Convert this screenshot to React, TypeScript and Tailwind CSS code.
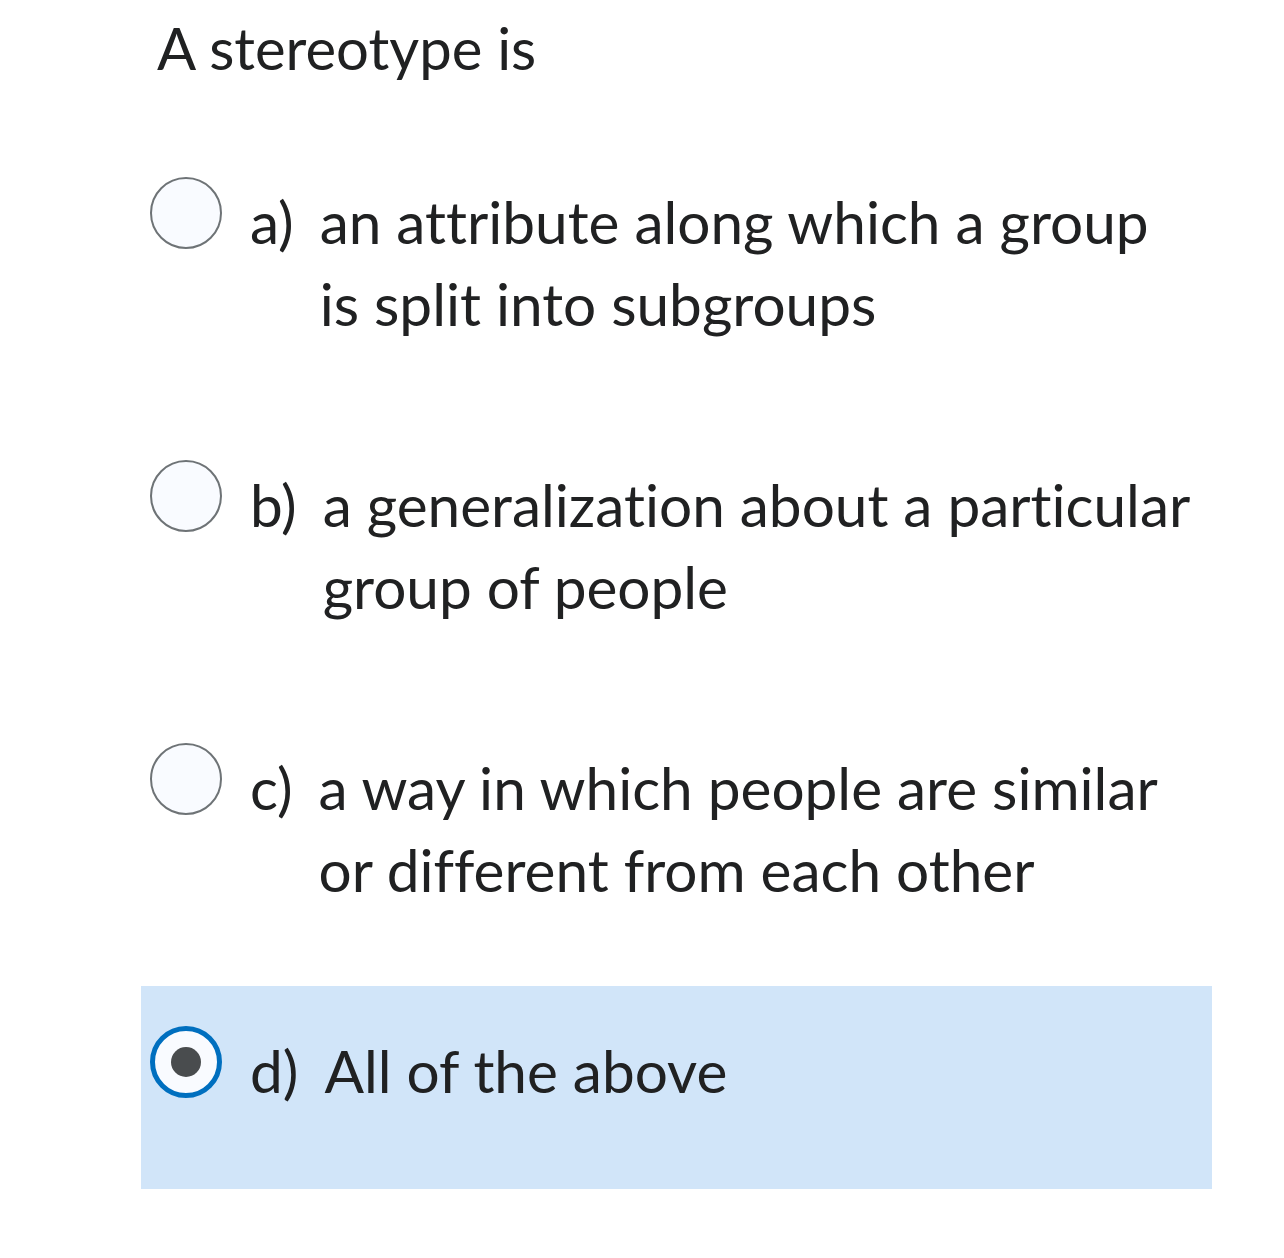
const options = [
  { key: "a)", lines: ["an attribute along which a group", "is split into subgroups"], selected: false },
  { key: "b)", lines: ["a generalization about a particular", "group of people"], selected: false },
  { key: "c)", lines: ["a way in which people are similar", "or different from each other"], selected: false },
  { key: "d)", lines: ["All of the above"], selected: true },
];

const Radio = ({ checked }: { checked: boolean }) => {
  if (checked) {
    return (
      <div className="w-[72px] h-[72px] shrink-0 rounded-full border-[5px] border-[#006fbf] bg-[#f9fbff] flex items-center justify-center">
        <div className="w-[30px] h-[30px] rounded-full bg-[#494c4e]" />
      </div>
    );
  }
  return <div className="w-[72px] h-[72px] shrink-0 rounded-full border-[2.5px] border-[#6e7376] bg-[#f9fbff]" />;
};

const App = () => {
  return (
    <div className="w-[1284px] h-[1258px] bg-white font-['Lato',sans-serif] text-[#202122] pl-[141px] pt-[8px] [font-variant-ligatures:none]">
      {/* question */}
      <h1 className="pl-[16px] text-[58px] leading-[80px] font-normal">A stereotype is</h1>

      <div className="mt-[49px] w-[1071px] flex flex-col gap-[80px]">
        {options.map((opt) => (
          <div
            key={opt.key}
            className={`h-[203px] pl-[9px] pt-[40px] flex items-start ${opt.selected ? "bg-[#d1e5f9]" : ""}`}
          >
            <Radio checked={opt.selected} />
            <div className="ml-[28px] mt-[3px] flex text-[58.5px] leading-[82px] whitespace-nowrap">
              <span className="mr-[26px] shrink-0">{opt.key}</span>
              <div className="flex flex-col">
                {opt.lines.map((l) => (
                  <span key={l}>{l}</span>
                ))}
              </div>
            </div>
          </div>
        ))}
      </div>
    </div>
  );
};

export default App;
